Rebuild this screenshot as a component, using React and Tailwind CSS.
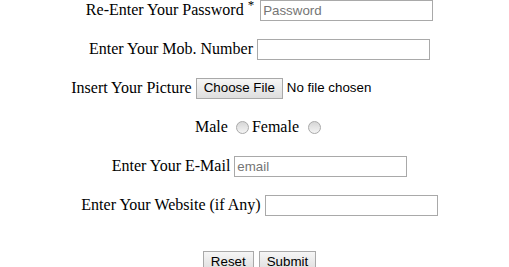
import React from "react";

const inputCls =
  "h-[21px] w-[173px] border border-[#a9a9a9] bg-white px-[2px] text-[13.33px] text-black placeholder:text-[#757575] outline-none";

const Radio = () => (
  <span className="inline-block h-[13px] w-[13px] shrink-0 rounded-full border border-[#a9a9a9] bg-gradient-to-b from-[#d6d6d6] to-[#f4f4f4]" />
);

const Btn = ({ children, wide }) => (
  <span
    className={`inline-flex h-[21px] items-center border border-[#a9a9a9] bg-gradient-to-b from-[#f6f6f6] to-[#dedede] text-[13.33px] text-black ${
      wide ? "px-[7px]" : "px-[7px]"
    }`}
  >
    {children}
  </span>
);

export default function App() {
  return (
    <div
      className="flex h-[267px] w-[509px] flex-col overflow-hidden bg-white pl-[10px] text-[16px] text-black"
      style={{ fontFamily: '"Liberation Serif", serif' }}
    >
      <div className="flex flex-col gap-[19px]">
        {/* Password */}
        <div className="flex h-[20px] items-center justify-center">
          <span>Re-Enter Your Password</span>
          <span className="relative -top-[6px] ml-[4px] mr-[6px] text-[13px] leading-none">*</span>
          <input
            className={inputCls}
            style={{ fontFamily: '"Liberation Sans", sans-serif' }}
            placeholder="Password"
            type="password"
          />
        </div>

        {/* Mobile */}
        <div className="flex h-[20px] items-center justify-center gap-[4px]">
          <span>Enter Your Mob. Number</span>
          <input className={inputCls} />
        </div>

        {/* Picture */}
        <div className="flex h-[20px] items-center justify-center gap-[4px]">
          <span>Insert Your Picture</span>
          <div
            className="flex w-[252px] items-center gap-[4px] text-[13.33px]"
            style={{ fontFamily: '"Liberation Sans", sans-serif' }}
          >
            <Btn wide>Choose File</Btn>
            <span>No file chosen</span>
          </div>
        </div>

        {/* Gender */}
        <div className="flex h-[20px] items-center justify-center">
          <span className="mr-[8px]">Male</span>
          <Radio />
          <span className="ml-[3px] mr-[9px]">Female</span>
          <Radio />
          <span className="w-[3px]" />
        </div>

        {/* Email */}
        <div className="flex h-[20px] items-center justify-center gap-[4px]">
          <span>Enter Your E-Mail</span>
          <input
            className={inputCls}
            style={{ fontFamily: '"Liberation Sans", sans-serif' }}
            placeholder="email"
            type="email"
          />
        </div>

        {/* Website */}
        <div className="flex h-[20px] items-center justify-center gap-[4px]">
          <span>Enter Your Website (if Any)</span>
          <input className={inputCls} />
        </div>
      </div>

      <div
        className="mt-[36px] flex justify-center gap-[5px]"
        style={{ fontFamily: '"Liberation Sans", sans-serif' }}
      >
        <Btn>Reset</Btn>
        <Btn>Submit</Btn>
      </div>
    </div>
  );
}
